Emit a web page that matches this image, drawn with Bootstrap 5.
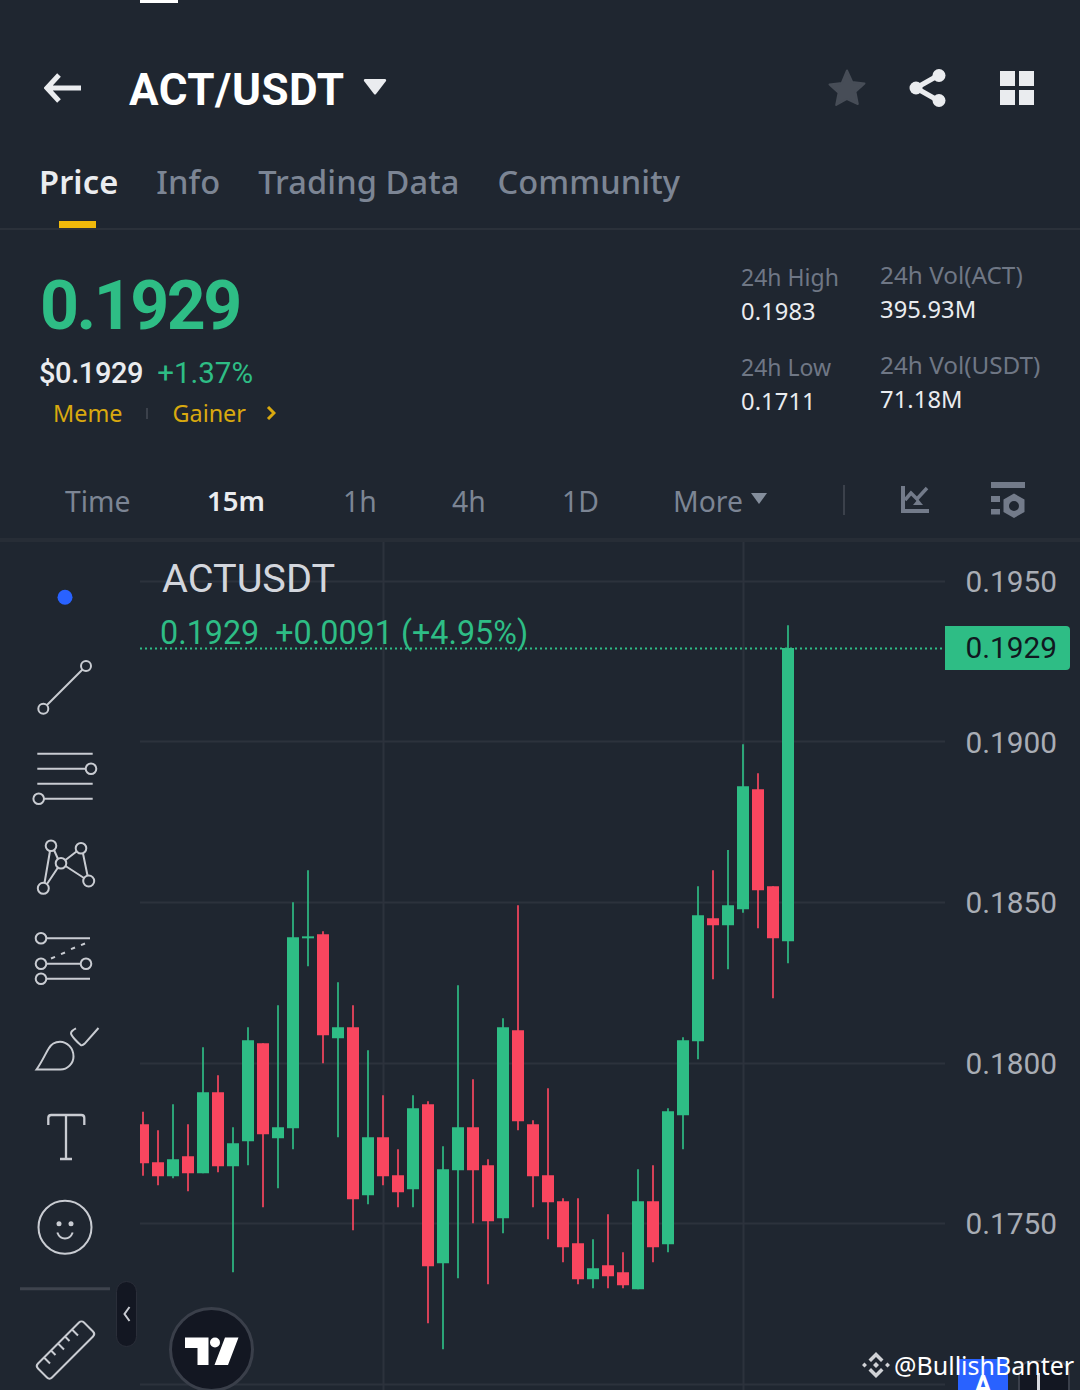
<!DOCTYPE html>
<html lang="en">
<head>
<meta charset="utf-8">
<title>ACT/USDT</title>
<link rel="stylesheet" href="https://cdn.jsdelivr.net/npm/bootstrap@5.3.0/dist/css/bootstrap.min.css">
<style>
html,body{margin:0;background:#1f2630}
.app{width:1080px;height:1390px;overflow:hidden;background:#1f2630;font-family:"Noto Sans","Liberation Sans",sans-serif;color:#eaecef;position:relative}
.status-strip{height:4px;position:relative;overflow:hidden}
.status-block{position:absolute;top:0;left:140px;width:38px;height:3px;background:#fff}
.head-bar{height:143px;padding:37px 46px 12px 44px}
.pair-name{font-family:Roboto,sans-serif;font-weight:700;font-size:44px;line-height:1;color:#fff;margin-left:47px;margin-top:3px;letter-spacing:.5px}
.pair-caret{margin-left:19px;margin-top:-3px}
.head-icons{gap:43px}
.grid-icon{margin-left:11px}
.tab-row{height:83px;padding:11px 0 0 39px;gap:38px;border-bottom:2px solid #2b313a;position:relative}
.tab-item{font-size:32.6px;font-weight:500;line-height:48px;color:#7c8594;position:relative;height:54px;letter-spacing:.1px}
.tab-on{color:#eaecef;font-weight:600;height:70px}
.tab-on::after{content:"";position:absolute;left:20px;width:37px;height:7px;bottom:0;background:#f0b90b}
.quote-row{height:230px;padding:0 40px 0 39px}
.big-price{font-family:Roboto,sans-serif;font-weight:700;font-size:68px;line-height:1;color:#2ebd85;margin-top:42px;margin-left:1px;letter-spacing:-2.500px}
.fiat-line{font-family:Roboto,sans-serif;font-weight:500;font-size:29px;line-height:1;margin-top:19px;letter-spacing:-.4px}
.fiat-up{color:#2ebd85;margin-left:14px;font-weight:400;font-size:29.500px;letter-spacing:0}
.tag-line{font-size:23.400px;line-height:1;color:#d9a90f;padding-left:14px;margin-top:13px}
.tag-sep{width:2px;height:11px;background:#3b414b;margin:0 24px}
.tag-arrow{margin-left:20px}
.stat-col-a{width:139px;padding-top:31px}
.stat-col-b{padding-top:28.500px;width:160px}
.stat-col-a .stat-lab{font-size:23px}
.stat-col-b .stat-lab{font-size:24.300px}
.stat-lab{line-height:32px;color:#6f7785;white-space:nowrap}
.stat-val{font-size:23.700px;line-height:36px;color:#eaecef;white-space:nowrap;letter-spacing:.1px;margin-bottom:22px}
.int-row{height:82px;position:relative;font-size:28.300px;color:#7c8594;border-bottom:4px solid #272d36}
.int-item{position:absolute;top:21px;line-height:40px}
.int-on{color:#eaecef;font-weight:600;font-size:27.500px}
.int-time{left:65px}.int-15m{left:207px}.int-1h{left:343px}.int-4h{left:452px}.int-1d{left:562px}.int-more{left:673px}
.int-art{position:absolute;left:0;top:0}
.chart-wrap{flex:1;position:relative}
.rail{width:140px}
.rail svg{display:block}
.rail .btn{border:0;padding:0;display:block;border-radius:0}
.ink{fill:none;stroke:#c9ccd2;stroke-width:2}
.plot{position:relative;flex:1}
.plot-art{position:absolute;left:0;top:0}
.sym-name{position:absolute;left:22px;top:14px;font-family:Roboto,sans-serif;font-size:39.700px;line-height:46px;color:#d3d6dd}
.sym-vals{position:absolute;left:20px;top:70px;font-family:Roboto,sans-serif;font-size:32.300px;line-height:42px;color:#2ebd85;white-space:nowrap}
.axis-col{position:absolute;left:805px;top:-40px;width:135px}
.axis-row{height:160.600px;line-height:160.600px;font-family:Roboto,sans-serif;font-size:29.800px;color:#a9adb5;padding-left:20.500px}
.tag-now{position:absolute;left:805px;top:84px;width:125px;height:44px;background:#2ebd85;border-radius:0 4px 4px 0;font-family:Roboto,sans-serif;font-size:29.800px;line-height:44px;color:#111820;padding-left:20.500px}
.fold-pill{position:absolute;left:116px;top:739px;width:21px;height:66px;border-radius:11px;background:#131722;border:1px solid #2a2e39}
.tv-disc{position:absolute;left:29px;top:765px;width:85px;height:85px;border-radius:50%;background:#131722;border:3px solid #3a3f4a}
.mark-line{position:absolute;left:722px;top:807px;height:32px;font-size:25px;line-height:32px;color:#fff;white-space:nowrap;z-index:3}
.blue-box{position:absolute;left:818px;top:817px;width:50px;height:31px;background:#2962ff;overflow:hidden;text-align:center;color:#fff;font-family:Roboto,sans-serif;font-weight:700;font-size:26px;line-height:52px;z-index:2}
.dark-box{position:absolute;left:878px;top:818px;width:52px;height:32px;background:#131722;border:2px solid #3a3f4a;border-bottom:0;border-radius:14px 14px 0 0;z-index:2}
.dark-box span{position:absolute;left:17px;top:11px;width:3px;height:20px;background:#d9dbe0}
</style>
</head>
<body>
<div class="app d-flex flex-column">
  <div class="status-strip"><span class="status-block"></span></div>

  <div class="head-bar d-flex align-items-center">
    <svg width="38" height="30" viewBox="0 0 38 30"><path d="M15 2 3 15l12 13M3.500 15H37" fill="none" stroke="#eaecef" stroke-width="5"/></svg>
    <div class="pair-name">ACT/USDT</div>
    <svg class="pair-caret" width="24" height="18" viewBox="0 0 24 18"><path d="M2 1h20c1 0 1.500 1 1 2L13 16c-.6.700-1.400.700-2 0L1 3C.5 2 1 1 2 1z" fill="#eaecef"/></svg>
    <div class="ms-auto d-flex align-items-center head-icons">
      <svg width="38" height="38" viewBox="0 0 38 38"><path d="M19 1.500l5.200 11.400 12.300 1.500-9.100 8.400 2.400 12.200L19 30l-10.800 6 2.400-12.200-9.100-8.400 12.300-1.500z" fill="#474d57" stroke="#474d57" stroke-width="2" stroke-linejoin="round"/></svg>
      <svg width="37" height="38" viewBox="0 0 37 38"><path d="M7 19 30 6M7 19l23 13" stroke="#eaecef" stroke-width="5"/><circle cx="7" cy="19" r="6.500" fill="#eaecef"/><circle cx="30" cy="6.500" r="6.500" fill="#eaecef"/><circle cx="30" cy="31.500" r="6.500" fill="#eaecef"/></svg>
      <svg class="grid-icon" width="34" height="34" viewBox="0 0 34 34"><path d="M0 0h15v15H0zM19 0h15v15H19zM0 19h15v15H0zM19 19h15v15H19z" fill="#eaecef"/></svg>
    </div>
  </div>

  <nav class="tab-row d-flex">
    <div class="tab-item tab-on">Price</div>
    <div class="tab-item">Info</div>
    <div class="tab-item">Trading Data</div>
    <div class="tab-item">Community</div>
  </nav>

  <section class="quote-row d-flex justify-content-between">
    <div>
      <div class="big-price">0.1929</div>
      <div class="fiat-line">$0.1929<span class="fiat-up">+1.37%</span></div>
      <div class="tag-line d-flex align-items-center">Meme<span class="tag-sep"></span>Gainer
        <svg class="tag-arrow" width="10" height="14" viewBox="0 0 10 14"><path d="M2 1l6 6-6 6" fill="none" stroke="#d9a90f" stroke-width="3"/></svg>
      </div>
    </div>
    <div class="d-flex">
      <div class="stat-col-a">
        <div class="stat-lab">24h High</div><div class="stat-val">0.1983</div>
        <div class="stat-lab">24h Low</div><div class="stat-val">0.1711</div>
      </div>
      <div class="stat-col-b">
        <div class="stat-lab">24h Vol(ACT)</div><div class="stat-val">395.93M</div>
        <div class="stat-lab">24h Vol(USDT)</div><div class="stat-val">71.18M</div>
      </div>
    </div>
  </section>

  <div class="int-row">
    <span class="int-item int-time">Time</span>
    <span class="int-item int-on int-15m">15m</span>
    <span class="int-item int-1h">1h</span>
    <span class="int-item int-4h">4h</span>
    <span class="int-item int-1d">1D</span>
    <span class="int-item int-more">More</span>
    <svg class="int-art" width="1080" height="78" viewBox="0 461 1080 78">
      <path d="M751 494h16l-8 11z" fill="#848e9c"/>
      <path d="M843 486h2v30h-2z" fill="#3b414b"/>
      <path d="M903 487v25h26" fill="none" stroke="#737b8a" stroke-width="4"/>
      <path d="M905 501l6-7 6 6 10-11" fill="none" stroke="#737b8a" stroke-width="3.500"/>
      <path d="M913 506l5-6 5 6z" fill="#737b8a"/>
      <path d="M991 483h34v6h-34zM991 497h9v6h-9zM991 510h9v5.500h-9z" fill="#737b8a"/>
      <path d="M1014 494.500l10.500 6v12.500l-10.500 6-10.500-6v-12.500zM1014 502a5 5 0 1 0 0 10 5 5 0 0 0 0-10z" fill="#737b8a" fill-rule="evenodd"/>
    </svg>
  </div>

  <div class="chart-wrap d-flex">
    <div class="rail">
      <button class="btn" aria-label="Cursor"><svg width="140" height="98" viewBox="0 542 140 98"><circle cx="65" cy="597.300" r="7.500" fill="#2962ff"/></svg></button>
      <button class="btn" aria-label="Trend line"><svg width="140" height="90" viewBox="0 640 140 90" class="ink"><circle cx="86" cy="666" r="5"/><circle cx="43.300" cy="708.700" r="5"/><path d="M82.500 669.500 47 705"/></svg></button>
      <button class="btn" aria-label="Channel"><svg width="140" height="85" viewBox="0 730 140 85" class="ink"><path d="M37.300 753.700h55.400M37.300 768.700H85.500M37.300 783.700h55.400M44 798.700h48.700"/><circle cx="91" cy="768.700" r="5.300"/><circle cx="38.700" cy="798.700" r="5.300"/></svg></button>
      <button class="btn" aria-label="Pattern"><svg width="140" height="90" viewBox="0 815 140 90" class="ink"><circle cx="51" cy="845.700" r="5.300"/><circle cx="81" cy="848.300" r="5.300"/><circle cx="61" cy="863.300" r="5.300"/><circle cx="43.300" cy="888.300" r="5.500"/><circle cx="88.700" cy="881" r="5.500"/><path d="M50 851 44.500 883M54 850l4 9M65.500 860l11-8.500M83 853.500l4.500 22M65.500 866 84 878M58 867.500 47 884"/></svg></button>
      <button class="btn" aria-label="Fibonacci"><svg width="140" height="95" viewBox="0 905 140 95" class="ink"><circle cx="41" cy="938.300" r="5.300"/><circle cx="41" cy="963.700" r="5.300"/><circle cx="86" cy="963.700" r="5.300"/><circle cx="41" cy="978.700" r="5.300"/><path d="M46.500 938.300H90M46.500 963.700H80.500M46.500 978.700H90"/><path d="M51 958.500l4-1.700M61 954.200l4-1.700M71 949.200l4-1.700M81 945.200l4-1.700"/></svg></button>
      <button class="btn" aria-label="Brush"><svg width="140" height="90" viewBox="0 1000 140 90" class="ink"><path d="M76 1028.300c-3 1.500-5 3-5 5 0 2.500 7 9.500 9.500 11.500 1.500 1 3 0 4-1l14-15.800"/><path d="M36.500 1069.500h24c7 0 13-6 13-13 0-8.500-6.500-14.800-13.500-14.800-5.500 0-9 2.500-11.500 7-3 5-7 14-12 20.800z"/></svg></button>
      <button class="btn" aria-label="Text"><svg width="140" height="85" viewBox="0 1090 140 85" class="ink"><path d="M48.300 1125v-7c0-1.500 1-3 3-3h30c2 0 3 1.500 3 3v7M66 1115v44M60 1159h12" stroke-width="2.300"/></svg></button>
      <button class="btn" aria-label="Emoji"><svg width="140" height="95" viewBox="0 1175 140 95" class="ink"><circle cx="65" cy="1227.300" r="26.500"/><circle cx="59" cy="1223.700" r="2.500" fill="#c9ccd2" stroke="none"/><circle cx="71" cy="1223.700" r="2.500" fill="#c9ccd2" stroke="none"/><path d="M57.300 1232.500c1.500 4 4.500 6 7.700 6s6.200-2 7.700-6"/></svg></button>
      <button class="btn" aria-label="Measure"><svg width="140" height="120" viewBox="0 1270 140 120"><path d="M20 1288.700h90" stroke="#3e434d" stroke-width="3"/><g class="ink"><path d="M79 1322.500c1.500-1.500 3.500-1.500 5 0l9 9c1.500 1.500 1.500 3.500 0 5l-41 41c-1.500 1.500-3.500 1.500-5 0l-9-9c-1.500-1.500-1.500-3.500 0-5zM72 1329.500l6 6M65 1336.500l4.500 4.500M58 1343.500l6 6M51 1350.500l4.500 4.500M44 1357.500l6 6"/></g></svg></button>
    </div>
    <div class="plot">
      <svg class="plot-art" width="940" height="848" viewBox="140 542 940 848">
        <path d="M140 581.500H945M140 741.500H945M140 902.500H945M140 1063.500H945M140 1223.500H945M140 1384.500H945M383.500 542V1390M743.500 542V1390" fill="none" stroke="#2c323c" stroke-width="2"/>
        <path d="M140 648.500H945" stroke="#2ebd85" stroke-width="2" stroke-dasharray="2 3"/>
        <g transform="translate(140 860) scale(.33333)" fill="none">
          <path stroke="#f9465f" stroke-width="5" d="M9 755V947M54 811V976M144 793V994M234 646V937M369 550V1042M549 214V610M639 436V1111M729 706V976M774 868V1042M864 724V1390M999 658V1090"/>
          <path stroke="#f9465f" stroke-width="36" d="M9 793V910M54 907V949M144 889V940M234 697V919M369 550V823M549 223V526M639 502V1018M729 832V949M774 946V997M864 733V1219M999 802V931"/>
          <path stroke="#2ebd85" stroke-width="5" d="M99 733V955M189 562V940M279 802V1237M324 502V916M414 436V985M459 127V868M504 31V319M594 367V832M684 571V1033M819 706V1042M909 859V1468M954 376V1255"/>
          <path stroke="#2ebd85" stroke-width="36" d="M99 898V949M189 697V940M279 850V919M324 541V844M414 802V835M459 232V805M594 502V535M684 832V1006M819 745V988M909 928V1210M954 802V931"/>
          <path stroke="#2ebd85" stroke-width="6" d="M486 232H522"/>
        </g>
        <g transform="translate(470 860) scale(.33333)" fill="none">
          <path stroke="#f9465f" stroke-width="5" d="M54 898V1273M144 136V811M189 781V1042M234 685V1138M279 1015V1207M324 1015V1273M414 1063V1285M459 1177V1285M549 916V1207M729 31V358M864 -260V205M909 79V415"/>
          <path stroke="#f9465f" stroke-width="36" d="M54 916V1084M144 511V784M189 793V949M234 946V1027M279 1024V1162M324 1150V1258M414 1216V1249M459 1237V1276M549 1024V1162M729 175V196M864 -212V91M909 79V235"/>
          <path stroke="#2ebd85" stroke-width="5" d="M99 475V1120M369 1138V1285M504 928V1288M594 745V1177M639 532V868M684 79V598M774 -30V328M819 -347V158M954 -704V310"/>
          <path stroke="#2ebd85" stroke-width="36" d="M99 502V1075M369 1225V1258M504 1024V1288M594 754V1153M639 541V766M684 166V544M774 136V196M819 -221V148M954 -636V244"/>
        </g>
      </svg>
      <div class="sym-name">ACTUSDT</div>
      <div class="sym-vals">0.1929&nbsp; +0.0091 (+4.95%)</div>
      <div class="axis-col">
        <div class="axis-row">0.1950</div>
        <div class="axis-row">0.1900</div>
        <div class="axis-row">0.1850</div>
        <div class="axis-row">0.1800</div>
        <div class="axis-row">0.1750</div>
      </div>
      <div class="tag-now">0.1929</div>
      <div class="tv-disc"></div>
      <svg class="plot-art" width="940" height="848" viewBox="140 542 940 848">
        <path d="M185 1337.500h23.500V1365h-11v-17H185zM225 1337.500h13.500L228 1365h-13.500z" fill="#fff"/><circle cx="215" cy="1342.500" r="5" fill="#fff"/>
      </svg>
      <div class="blue-box">A</div>
      <div class="dark-box"><span></span></div>
      <div class="mark-line d-flex align-items-center">
        <svg class="me-1" width="28" height="28" viewBox="0 0 28 28" fill="#d0d2d6"><path d="M14 1l7.500 7.500-2.500 2.500-5-5-5 5-2.500-2.500zM14 11l3 3-3 3-3-3zM9 17l5 5 5-5 2.500 2.500L14 27l-7.500-7.500zM0 14l2.500-2.500L5 14l-2.500 2.500zM23 14l2.500-2.500L28 14l-2.500 2.500z"/></svg>@BullishBanter
      </div>
    </div>
    <div class="fold-pill d-flex align-items-center justify-content-center">
      <svg width="8" height="16" viewBox="0 0 8 16"><path d="M6.500 1 1.500 8l5 7" fill="none" stroke="#c9ccd2" stroke-width="2"/></svg>
    </div>
  </div>
</div>
</body>
</html>
